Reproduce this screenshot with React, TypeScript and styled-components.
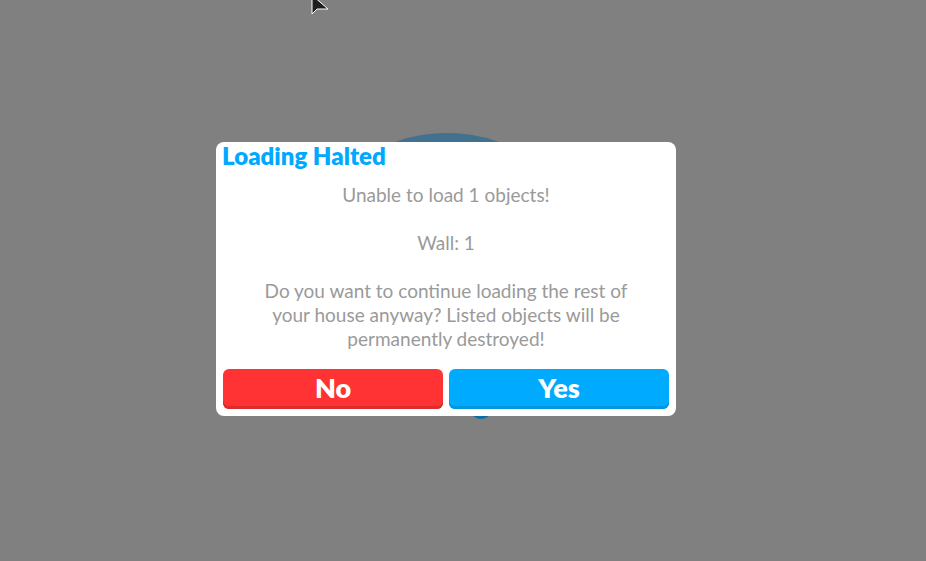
import React from "react";
import styled, { createGlobalStyle } from "styled-components";

const Global = createGlobalStyle`
  html, body { margin: 0; padding: 0; }
  body { background: #808080; width: 926px; height: 561px; overflow: hidden; }
  #root { width: 926px; height: 561px; }
`;

const Stage = styled.div`
  position: relative;
  width: 926px;
  height: 561px;
  background: #808080;
  display: flex;
  align-items: flex-start;
  justify-content: flex-start;
  padding: 142px 0 0 216px;
  box-sizing: border-box;
  font-family: Lato, "Liberation Sans", sans-serif;
`;

const Backdrop = styled.svg`
  position: absolute;
  left: 0;
  top: 0;
  width: 926px;
  height: 561px;
  pointer-events: none;
`;

const Cursor = styled.svg`
  position: absolute;
  left: 311px;
  top: -6px;
  width: 20px;
  height: 22px;
`;

const Dialog = styled.div`
  position: relative;
  width: 460px;
  height: 274px;
  background: #ffffff;
  border-radius: 8px;
  display: flex;
  flex-direction: column;
  box-sizing: border-box;
  padding: 0 7px 7px;
`;

const Title = styled.div`
  font-weight: 800;
  font-size: 24px;
  line-height: 28px;
  color: #00a8ff;
  padding: 0;
  margin-left: -1px;
`;

const Message = styled.div`
  flex: 1;
  font-size: 19px;
  line-height: 24px;
  color: #9a9a9a;
  text-align: center;
  white-space: pre-line;
  padding-top: 13px;
  width: 380px;
  align-self: center;
`;

const Buttons = styled.div`
  display: grid;
  grid-template-columns: 1fr 1fr;
  gap: 6px;
`;

const Button = styled.button<{ $color: string; $shade: string }>`
  height: 40px;
  border: none;
  border-radius: 6px;
  background: ${(p) => p.$color};
  box-shadow: inset 0 -3px 0 ${(p) => p.$shade};
  color: #ffffff;
  font-family: Lato, "Liberation Sans", sans-serif;
  font-weight: 800;
  font-size: 27px;
  line-height: 38px;
  padding: 0 0 3px;
  cursor: pointer;
`;

export default function App() {
  return (
    <>
      <Global />
      <Stage>
        <Backdrop viewBox="0 0 926 561">
          <ellipse cx="447" cy="240" rx="130" ry="107" fill="#41718e" />
          <ellipse cx="481" cy="395" rx="16" ry="24" fill="#0f6ea6" />
        </Backdrop>
        <Cursor viewBox="0 0 20 22">
          <path d="M1 1 L1 20 L6 15 L17 15 Z" fill="#1e1e1e" stroke="#ffffff" strokeWidth="1" />
        </Cursor>
        <Dialog>
          <Title>Loading Halted</Title>
          <Message>
            {"Unable to load 1 objects!\n\nWall: 1\n\nDo you want to continue loading the rest of your house anyway? Listed objects will be permanently destroyed!"}
          </Message>
          <Buttons>
            <Button $color="#ff3333" $shade="#dd2c2c">No</Button>
            <Button $color="#00aaff" $shade="#0096e0">Yes</Button>
          </Buttons>
        </Dialog>
      </Stage>
    </>
  );
}
